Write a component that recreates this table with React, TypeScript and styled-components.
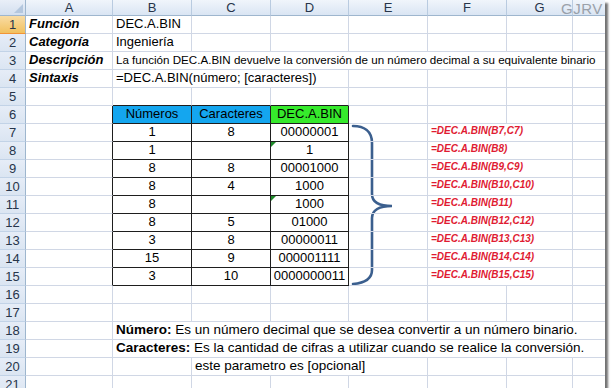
import React from "react";
import styled, { createGlobalStyle } from "styled-components";

const Global = createGlobalStyle`
  html, body {
    margin: 0;
    padding: 0;
    background: #ffffff;
  }
  body {
    font-family: "Liberation Sans", Arial, sans-serif;
  }
`

const Frame = styled.div`
  position: relative;
  width: 605px;
  height: 388px;
  overflow: hidden;
  background: #ffffff;
  box-shadow: 3px 3px 2px rgba(0, 0, 0, 0.55);
`
const Sheet = styled.div`
  display: grid;
  grid-template-columns: 26px 87px 79px 79px 78px 79px 79px 66px 40px;
  grid-template-rows: 16px repeat(21, 18px);
  font-family: "Liberation Sans", Arial, sans-serif;
  color: #000;
`
const Corner = styled.div`
  position: relative;
  grid-row: 1;
  grid-column: 1;
  background: linear-gradient(#e9eff8, #d3dfef);
  border-right: 1px solid #9eb6ce;
  border-bottom: 1px solid #9eb6ce;
  box-sizing: border-box;
  &::after {
    content: "";
    position: absolute;
    right: 2px;
    bottom: 2px;
    border-left: 9px solid transparent;
    border-bottom: 9px solid #b4c7de;
  }
`
const ColHead = styled.div<{ $col: number }>`
  grid-row: 1;
  grid-column: ${(p) => p.$col + 1};
  background: linear-gradient(#f0f5fb, #dae5f3);
  border-right: 1px solid #b9cbe0;
  border-bottom: 1px solid #9eb6ce;
  box-sizing: border-box;
  display: flex;
  align-items: center;
  justify-content: center;
  font-size: 13px;
  color: #27354a;
`
const RowHead = styled.div<{ $row: number; $active?: boolean }>`
  grid-row: ${(p) => p.$row + 1};
  grid-column: 1;
  background: ${(p) =>
    p.$active ? "linear-gradient(#f9dca4, #f1c15f)" : "linear-gradient(#e6edf7, #dbe5f2)"};
  border-right: 1px solid #9eb6ce;
  border-bottom: 1px solid ${(p) => (p.$active ? "#f29436" : "#c2d3e7")};
  box-sizing: border-box;
  display: flex;
  align-items: center;
  justify-content: center;
  font-size: 13px;
  color: #27354a;
`
const Cell = styled.div<{
  $row: number;
  $col: number;
  $span?: number;
  $align?: string;
  $fill?: string;
  $dark?: boolean;
  $bb?: boolean;
  $br?: boolean;
  $size?: number;
}>`
  position: relative;
  grid-row: ${(p) => p.$row + 1};
  grid-column: ${(p) => p.$col + 1} / span ${(p) => p.$span || 1};
  box-sizing: border-box;
  border-right: 1px solid ${(p) => (p.$dark || p.$br ? "#1e1e1e" : "#d0d7e5")};
  border-bottom: 1px solid ${(p) => (p.$dark || p.$bb ? "#1e1e1e" : "#d0d7e5")};
  background: ${(p) => p.$fill || "transparent"};
  display: flex;
  align-items: flex-end;
  justify-content: ${(p) => p.$align || "flex-start"};
  padding: 0 3px 1px 3px;
  font-size: ${(p) => p.$size || 13}px;
  line-height: 16px;
  white-space: nowrap;
  overflow: visible;
`
const Label = styled.span`
  font-weight: bold;
  font-style: italic;
`
const Strong = styled.span`
  font-weight: bold;
`
const Formula = styled.span`
  color: #e01b32;
  font-weight: bold;
  font-style: italic;
  font-size: 10px;
  margin-bottom: 1px;
`
const Marker = styled.span`
  position: absolute;
  left: 0;
  top: 0;
  border-right: 5px solid transparent;
  border-top: 5px solid #1e8a2a;
`
const Brace = styled.svg`
  grid-column: 6;
  grid-row: 8 / span 9;
  width: 79px;
  height: 162px;
  overflow: visible;
`
const Watermark = styled.div`
  position: absolute;
  top: 0;
  left: 561px;
  font-size: 15px;
  color: #8e949c;
  letter-spacing: 0.5px;
  font-family: "Liberation Sans", Arial, sans-serif;
  opacity: 0.85;
`

type Def = {
  col: number;
  span?: number;
  content?: React.ReactNode;
  align?: string;
  fill?: string;
  dark?: boolean;
  size?: number;
  marker?: boolean;
};

const data: [number, number, string, boolean][] = [
  [1, 8, "00000001", false],
  [1, 0, "1", true],
  [8, 8, "00001000", false],
  [8, 4, "1000", false],
  [8, 0, "1000", true],
  [8, 5, "01000", false],
  [3, 8, "00000011", false],
  [15, 9, "000001111", false],
  [3, 10, "0000000011", false],
];

const rowDefs: Record<number, Def[]> = {
  1: [
    { col: 1, content: <Label>Función</Label> },
    { col: 2, content: "DEC.A.BIN" },
  ],
  2: [
    { col: 1, content: <Label>Categoría</Label> },
    { col: 2, content: "Ingeniería" },
  ],
  3: [
    { col: 1, content: <Label>Descripción</Label> },
    {
      col: 2,
      span: 7,
      size: 11.6,
      content:
        "La función DEC.A.BIN devuelve la conversión de un número decimal a su equivalente binario",
    },
  ],
  4: [
    { col: 1, content: <Label>Sintaxis</Label> },
    { col: 2, span: 3, content: "=DEC.A.BIN(número; [caracteres])" },
  ],
  6: [
    { col: 2, content: "Números", align: "center", fill: "#14a6ef", dark: true },
    { col: 3, content: "Caracteres", align: "center", fill: "#14a6ef", dark: true },
    { col: 4, content: "DEC.A.BIN", align: "center", fill: "#36ea2c", dark: true },
  ],
  18: [
    {
      col: 2,
      span: 7,
      size: 13.5,
      content: (
        <>
          <Strong>Número:</Strong>&nbsp;Es un número decimal que se desea convertir a un número binario.
        </>
      ),
    },
  ],
  19: [
    {
      col: 2,
      span: 7,
      size: 13.5,
      content: (
        <>
          <Strong>Caracteres:</Strong>&nbsp;Es la cantidad de cifras a utilizar cuando se realice la conversión.
        </>
      ),
    },
  ],
  20: [{ col: 3, span: 3, size: 13.5, content: "este parametro es [opcional]" }],
};

data.forEach(([n, c, bin, marker], i) => {
  const refs = c ? `B${i + 7},C${i + 7}` : `B${i + 7}`;
  rowDefs[i + 7] = [
    { col: 2, content: String(n), align: "center", dark: true },
    { col: 3, content: c ? String(c) : "", align: "center", dark: true },
    { col: 4, content: bin, align: "center", dark: true, marker },
    { col: 6, span: 2, content: <Formula>=DEC.A.BIN({refs})</Formula> },
  ];
});

const letters = ["A", "B", "C", "D", "E", "F", "G", ""];

const renderRow = (r: number) => {
  const defs = rowDefs[r] || [];
  const out: React.ReactNode[] = [
    <RowHead key={`h${r}`} $row={r} $active={r === 1}>
      {r}
    </RowHead>,
  ];
  let c = 1;
  while (c <= 8) {
    const d = defs.find((x) => x.col === c);
    const inTable = c >= 2 && c <= 4 && r >= 6 && r <= 15;
    if (d) {
      out.push(
        <Cell
          key={`${r}-${c}`}
          $row={r}
          $col={c}
          $span={d.span}
          $align={d.align}
          $fill={d.fill}
          $dark={d.dark}
          $size={d.size}
        >
          {d.marker && <Marker />}
          {d.content}
        </Cell>
      );
      c += d.span || 1;
    } else {
      out.push(
        <Cell
          key={`${r}-${c}`}
          $row={r}
          $col={c}
          $bb={r === 5 && c >= 2 && c <= 4}
          $br={c === 1 && r >= 6 && r <= 15}
          $dark={inTable}
        />
      );
      c += 1;
    }
  }
  return out;
};

const App: React.FC = () => {
  const rows = Array.from({ length: 21 }, (_, i) => i + 1);
  return (
    <>
      <Global />
      <Frame>
        <Sheet>
          <Corner />
          {letters.map((l, i) => (
            <ColHead key={`c${i}`} $col={i + 1}>
              {l}
            </ColHead>
          ))}
          {rows.map((r) => renderRow(r))}
          <Brace viewBox="0 0 79 162">
            <path
              d="M4 2 C15 2, 23 7, 23 19 L23 70 C23 78, 30 82, 43 82 C30 82, 23 86, 23 94 L23 146 C23 155, 15 159, 4 160"
              fill="none"
              stroke="#3b5f8e"
              strokeWidth="2.6"
              strokeLinecap="round"
            />
          </Brace>
        </Sheet>
        <Watermark>GJRV</Watermark>
      </Frame>
    </>
  );
};

export default App;
